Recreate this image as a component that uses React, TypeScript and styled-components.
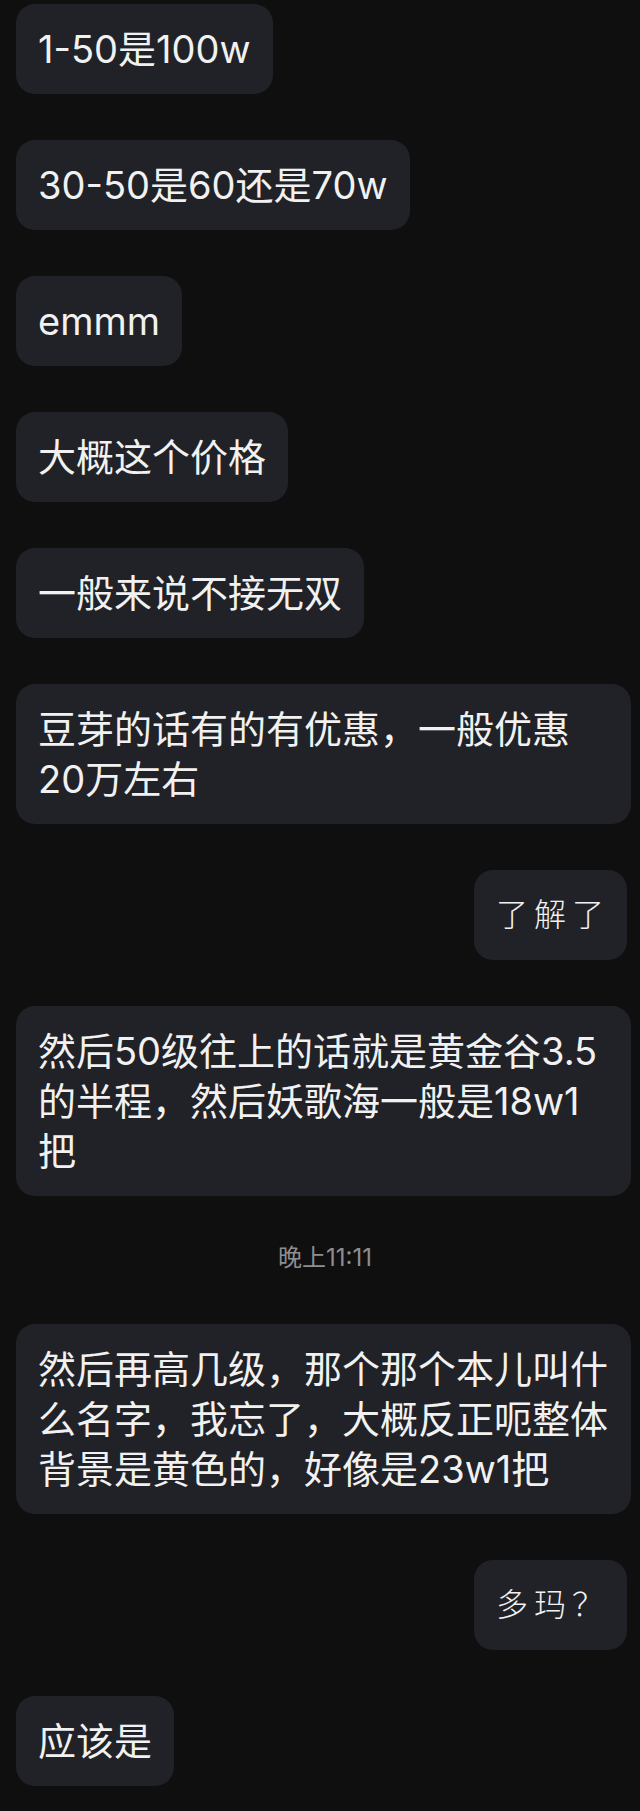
import styled, { createGlobalStyle } from 'styled-components';

const GlobalStyle = createGlobalStyle`
  html, body {
    margin: 0;
    padding: 0;
    background: #0f0f10;
  }
  body {
    font-family: Inter, 'Noto Sans CJK SC', sans-serif;
    -webkit-font-smoothing: antialiased;
  }
`;

const Thread = styled.main`
  display: flex;
  flex-direction: column;
  gap: 46px;
  min-height: 1811px;
  box-sizing: border-box;
  padding: 4px 9px 23px 16px;
  background: #0f0f10;
`;

const Row = styled.div<{ $mine?: boolean }>`
  display: flex;
  justify-content: ${({ $mine }) => ($mine ? 'flex-end' : 'flex-start')};
  padding-right: ${({ $mine }) => ($mine ? '4px' : '0')};
`;

const Bubble = styled.div<{ $hand?: boolean }>`
  box-sizing: border-box;
  max-width: 615px;
  padding: ${({ $hand }) => ($hand ? '20px 17px 20px 22px' : '20px 22px')};
  border-radius: 19px;
  background: #202227;
  color: #f1f1f1;
  font-size: ${({ $hand }) => ($hand ? '32px' : '38px')};
  letter-spacing: ${({ $hand }) => ($hand ? '6px' : '0')};
  font-weight: ${({ $hand }) => ($hand ? 300 : 400)};
  line-height: 50px;
`;

const TimeStamp = styled.div`
  margin-top: -4px;
  height: 40px;
  line-height: 40px;
  text-align: center;
  font-size: 24px;
  color: #8e8e90;
  padding-left: 3px;
`;

type Message =
  | { kind: 'msg'; text: string; mine?: boolean; hand?: boolean }
  | { kind: 'time'; text: string };

const messages: Message[] = [
  { kind: 'msg', text: '1-50是100w' },
  { kind: 'msg', text: '30-50是60还是70w' },
  { kind: 'msg', text: 'emmm' },
  { kind: 'msg', text: '大概这个价格' },
  { kind: 'msg', text: '一般来说不接无双' },
  { kind: 'msg', text: '豆芽的话有的有优惠，一般优惠20万左右' },
  { kind: 'msg', text: '了解了', mine: true, hand: true },
  { kind: 'msg', text: '然后50级往上的话就是黄金谷3.5的半程，然后妖歌海一般是18w1把' },
  { kind: 'time', text: '晚上11:11' },
  {
    kind: 'msg',
    text: '然后再高几级，那个那个本儿叫什么名字，我忘了，大概反正呃整体背景是黄色的，好像是23w1把'
  },
  { kind: 'msg', text: '多玛？', mine: true, hand: true },
  { kind: 'msg', text: '应该是' }
];

const App = () => {
  return (
    <>
      <GlobalStyle />
      <Thread>
        {messages.map((m, i) =>
          m.kind === 'time' ? (
            <TimeStamp key={i}>{m.text}</TimeStamp>
          ) : (
            <Row key={i} $mine={m.mine}>
              <Bubble $hand={m.hand}>{m.text}</Bubble>
            </Row>
          )
        )}
      </Thread>
    </>
  );
};

export default App;
